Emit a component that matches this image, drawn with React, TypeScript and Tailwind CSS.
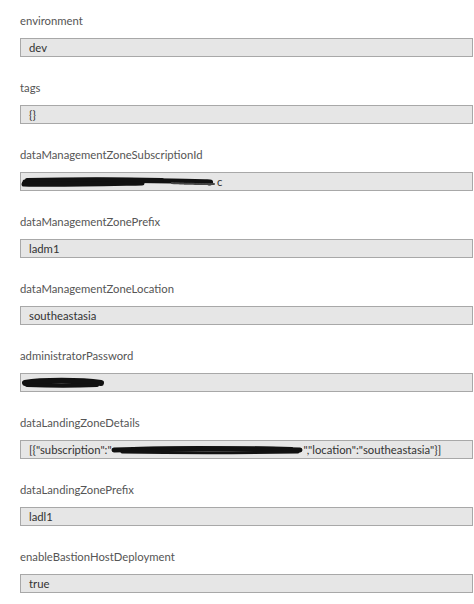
import React from "react";

const font = { fontFamily: 'Lato, "Open Sans", sans-serif' };

function Scribble({ w, children }: { w: number; children: React.ReactNode }) {
  return (
    <svg width={w} height={16} viewBox={`0 0 ${w} 16`} className="shrink-0 overflow-visible">
      <g fill="none" stroke="#111" strokeLinecap="round">
        {children}
      </g>
    </svg>
  );
}

const FIELDS: { label: string; value: React.ReactNode }[] = [
  { label: "environment", value: "dev" },
  { label: "tags", value: "{}" },
  {
    label: "dataManagementZoneSubscriptionId",
    value: (
      <span className="-ml-[7px] flex items-center">
        <Scribble w={194}>
          <path d="M3 8 C40 6, 90 6, 150 7 S 180 8, 188 9" strokeWidth={5} />
          <path d="M2 10 C30 11, 70 10, 120 9" strokeWidth={5} />
          <path d="M5 6 C50 5, 100 5, 140 6" strokeWidth={4} />
          <path d="M150 9 C165 10, 178 10, 192 10" strokeWidth={2} stroke="#444" strokeDasharray="2 1" />
        </Scribble>
        <span className="ml-[1px]">c</span>
      </span>
    ),
  },
  { label: "dataManagementZonePrefix", value: "ladm1" },
  { label: "dataManagementZoneLocation", value: "southeastasia" },
  {
    label: "administratorPassword",
    value: (
      <span className="-ml-[8px] flex items-center">
        <Scribble w={84}>
          <path d="M4 8 C20 5, 60 5, 80 8" strokeWidth={6} />
          <path d="M6 10 C30 11, 55 11, 76 10" strokeWidth={4} />
        </Scribble>
      </span>
    ),
  },
  {
    label: "dataLandingZoneDetails",
    value: (
      <span className="flex items-center">
        <span>[{"{"}"subscription":"</span>
        <Scribble w={192}>
          <path d="M2 8 C50 6, 120 6, 188 8" strokeWidth={5} />
          <path d="M10 10 C60 11, 130 11, 186 10" strokeWidth={3} />
          <path d="M20 6 C80 5, 140 5, 180 6" strokeWidth={2} />
        </Scribble>
        <span>","location":"southeastasia"{"}"}]</span>
      </span>
    ),
  },
  { label: "dataLandingZonePrefix", value: "ladl1" },
  { label: "enableBastionHostDeployment", value: "true" },
];

export default function App() {
  return (
    <div className="w-[474px] h-[604px] overflow-hidden bg-white pt-[13px]" style={font}>
      {FIELDS.map(f => (
        <div key={f.label} className="pl-[20px] h-[67px]">
          <div className="h-[16px] text-[11.3px] leading-[16px] text-[#555]">{f.label}</div>
          <div className="mt-[9px] h-[19px] w-[453px] border border-[#a8a8a8] bg-[#e6e6e6] pl-[8px] flex items-center text-[11.3px] text-[#333] leading-none">
            {f.value}
          </div>
        </div>
      ))}
    </div>
  );
}
